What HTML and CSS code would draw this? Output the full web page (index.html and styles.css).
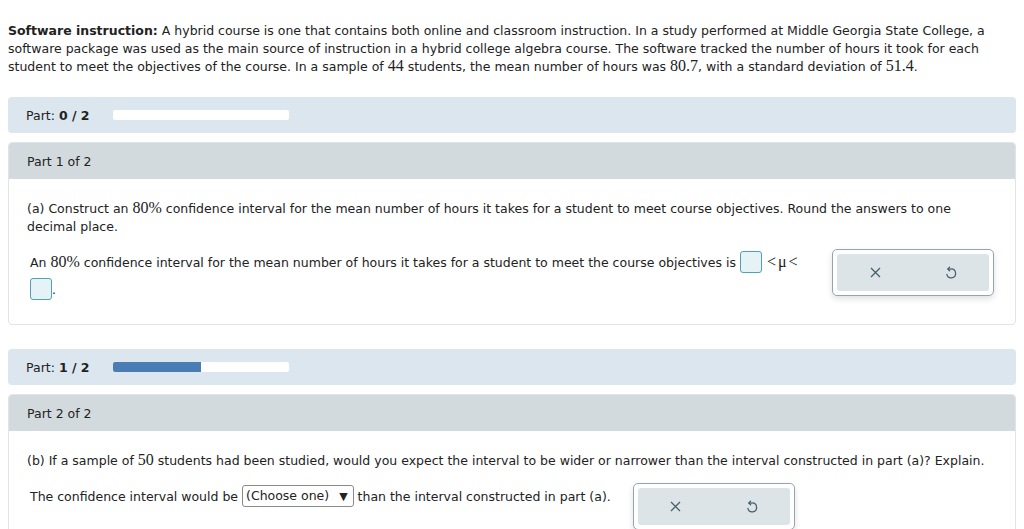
FILE: index.html
```html
<!DOCTYPE html>
<html>
<head>
<meta charset="utf-8">
<link rel="stylesheet" href="styles.css">
</head>
<body>
<p class="intro"><b>Software instruction:</b> A hybrid course is one that contains both online and classroom instruction. In a study performed at Middle Georgia State College, a software package was used as the main source of instruction in a hybrid college algebra course. The software tracked the number of hours it took for each student to meet the objectives of the course. In a sample of <span class="m">44</span> students, the mean number of hours was <span class="m">80.7</span>, with a standard deviation of <span class="m">51.4</span>.</p>

<div class="partbar">
  <span>Part: <b>0 / 2</b></span>
  <div class="progress"><div class="fill" style="width:0%"></div></div>
</div>

<section class="part">
  <div class="part-head">Part 1 of 2</div>
  <div class="part-body">
    <p class="q">(a) Construct an <span class="m">80%</span> confidence interval for the mean number of hours it takes for a student to meet course objectives. Round the answers to one decimal place.</p>
    <div class="answer-row">
      <div class="answer-text">An <span class="m">80%</span> confidence interval for the mean number of hours it takes for a student to meet the course objectives is <span class="inbox"></span><span class="m sym">&lt;μ&lt;</span> <span class="inbox"></span>.</div>
      <div class="tools">
        <div class="tools-inner">
          <button class="tbtn" aria-label="clear"><svg width="11" height="11" viewBox="0 0 11 11"><path d="M1 1L10 10M10 1L1 10" stroke="#46606b" stroke-width="1.3" fill="none"/></svg></button>
          <button class="tbtn" aria-label="undo"><svg width="12" height="14" viewBox="0 0 12 14"><path d="M4.6 1.2L2.8 3L4.6 4.8" stroke="#46606b" stroke-width="1.25" fill="none" stroke-linecap="round" stroke-linejoin="round"/><path d="M3 3H6.2A4.4 4.4 0 1 1 1.9 8.3" stroke="#46606b" stroke-width="1.25" fill="none" stroke-linecap="round"/></svg></button>
        </div>
      </div>
    </div>
  </div>
</section>

<div class="partbar second">
  <span>Part: <b>1 / 2</b></span>
  <div class="progress"><div class="fill" style="width:50%"></div></div>
</div>

<section class="part">
  <div class="part-head">Part 2 of 2</div>
  <div class="part-body">
    <p class="q">(b) If a sample of <span class="m">50</span> students had been studied, would you expect the interval to be wider or narrower than the interval constructed in part (a)? Explain.</p>
    <div class="answer-row">
      <div class="answer-text">The confidence interval would be <span class="select">(Choose one) <span class="tri">▼</span></span> than the interval constructed in part (a).</div>
      <div class="tools">
        <div class="tools-inner">
          <button class="tbtn" aria-label="clear"><svg width="11" height="11" viewBox="0 0 11 11"><path d="M1 1L10 10M10 1L1 10" stroke="#46606b" stroke-width="1.3" fill="none"/></svg></button>
          <button class="tbtn" aria-label="undo"><svg width="12" height="14" viewBox="0 0 12 14"><path d="M4.6 1.2L2.8 3L4.6 4.8" stroke="#46606b" stroke-width="1.25" fill="none" stroke-linecap="round" stroke-linejoin="round"/><path d="M3 3H6.2A4.4 4.4 0 1 1 1.9 8.3" stroke="#46606b" stroke-width="1.25" fill="none" stroke-linecap="round"/></svg></button>
        </div>
      </div>
    </div>
  </div>
</section>
</body>
</html>
```
FILE: styles.css
```css
body {
  margin: 8px;
  font-family: "DejaVu Sans", Verdana, sans-serif;
  font-size: 12.5px;
  color: #222;
  background: #fff;
}
.intro {
  margin: 14px 0 0;
  line-height: 18px;
}
.m {
  font-family: "Liberation Serif", "Times New Roman", serif;
  font-size: 16px;
  line-height: 1;
}
.partbar {
  margin-top: 21px;
  height: 36px;
  background: #dbe6ef;
  border-radius: 4px;
  display: flex;
  align-items: center;
  padding-left: 18px;
  gap: 23px;
}
.partbar.second {
  margin-top: 24px;
}
.progress {
  width: 176px;
  height: 10px;
  background: #fff;
  border-radius: 2px;
  overflow: hidden;
}
.fill {
  height: 100%;
  background: #4a7db3;
}
.part {
  margin-top: 9px;
  border: 1px solid #dfe4e6;
  border-radius: 4px;
  overflow: hidden;
}
.part-head {
  height: 36px;
  background: #d3dadd;
  display: flex;
  align-items: center;
  padding-left: 18px;
}
.part-body {
  padding: 21px 21px 21px 18px;
}
.q {
  margin: 0 0 13px;
  line-height: 18px;
}
.answer-row {
  display: flex;
  align-items: flex-start;
  gap: 22px;
  padding-left: 3px;
}
.answer-text {
  max-width: 781px;
  line-height: 27px;
}
.inbox {
  display: inline-block;
  width: 20px;
  height: 20px;
  border: 1px solid #4ea2b3;
  background: #e5f3f6;
  border-radius: 3px;
  vertical-align: middle;
  margin-top: -3px;
}
.sym {
  font-size: 16px;
  letter-spacing: 2px;
  margin-left: 5px;
}
.select {
  display: inline-block;
  height: 20px;
  line-height: 20px;
  border: 1px solid #8a8a8a;
  border-radius: 3px;
  padding: 0 5px 0 3px;
  vertical-align: middle;
  margin-top: -3px;
}
.tri {
  font-size: 11px;
  margin-left: 6px;
}
.tools {
  flex: none;
  width: 152px;
  padding: 4px;
  border: 1px solid #93a6ad;
  border-radius: 5px;
  background: #fff;
  box-shadow: 0 3px 6px rgba(0,0,0,0.12);
}
.tools-inner {
  display: flex;
  height: 37px;
  background: #dde4e7;
  border-radius: 3px;
}
.tbtn {
  flex: 1;
  border: 0;
  background: transparent;
  padding: 0;
  display: flex;
  align-items: center;
  justify-content: center;
}
```
